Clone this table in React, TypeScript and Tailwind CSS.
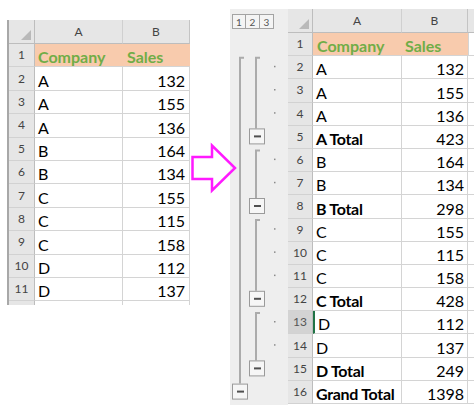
import React from "react";

type Row = { a: string; b: number; bold?: boolean; selected?: boolean };

const leftRows: Row[] = [
  { a: "A", b: 132 },
  { a: "A", b: 155 },
  { a: "A", b: 136 },
  { a: "B", b: 164 },
  { a: "B", b: 134 },
  { a: "C", b: 155 },
  { a: "C", b: 115 },
  { a: "C", b: 158 },
  { a: "D", b: 112 },
  { a: "D", b: 137 },
];

const rightRows: Row[] = [
  { a: "A", b: 132 },
  { a: "A", b: 155 },
  { a: "A", b: 136 },
  { a: "A Total", b: 423, bold: true },
  { a: "B", b: 164 },
  { a: "B", b: 134 },
  { a: "B Total", b: 298, bold: true },
  { a: "C", b: 155 },
  { a: "C", b: 115 },
  { a: "C", b: 158 },
  { a: "C Total", b: 428, bold: true },
  { a: "D", b: 112, selected: true },
  { a: "D", b: 137 },
  { a: "D Total", b: 249, bold: true },
  { a: "Grand Total", b: 1398, bold: true },
];

const ROW_R = 23.2;

function Corner() {
  return (
    <svg width="10" height="10" className="absolute right-[3px] bottom-[3px]">
      <polygon points="10,0 10,10 0,10" fill="#b9b9b9" />
    </svg>
  );
}

function MinusBox({ x, y }: { x: number; y: number }) {
  return (
    <g>
      <rect x={x + 0.5} y={y + 0.5} width="15" height="15" fill="#f6f6f6" stroke="#9a9a9a" />
      <line x1={x + 5} x2={x + 12} y1={y + 8} y2={y + 8} stroke="#505050" strokeWidth="2" />
    </g>
  );
}

function Outline() {
  const top = (i: number) => (i - 1) * ROW_R;
  const mid = (i: number) => top(i) + ROW_R / 2;
  const groups = [
    [2, 5],
    [6, 8],
    [9, 12],
    [13, 15],
  ];
  const dots = [2, 3, 4, 6, 7, 9, 10, 11, 13, 14];
  const line = "#ababab";
  return (
    <svg width="58" height="372" className="block">
      {/* level 1 */}
      <path d={`M14 ${top(2) + 1.5} H10 V${mid(16) - 9}`} stroke={line} strokeWidth="2" fill="none" />
      <MinusBox x={2} y={mid(16) - 9} />
      {/* level 2 */}
      {groups.map(([s, e]) => (
        <g key={s}>
          <path d={`M30 ${top(s) + 1.5} H26 V${mid(e) - 9}`} stroke={line} strokeWidth="2" fill="none" />
          <MinusBox x={19} y={mid(e) - 9} />
        </g>
      ))}
      {dots.map((r) => (
        <rect key={r} x="44" y={mid(r) - 2} width="1.5" height="1.5" fill="#8a8a8a" />
      ))}
    </svg>
  );
}

function LeftSheet() {
  return (
    <div className="ml-[7px] mt-[20px] flex flex-col border-l-2 border-[#a8a8a8]">
      <div className="flex h-[24px] bg-[#e6e6e6] text-[12px] text-[#444]">
        <div className="relative w-[26px] border-r border-b border-[#bdbdbd]">
          <Corner />
        </div>
        <div className="flex w-[88px] items-center justify-center border-r border-b border-r-[#d0d0d0] border-b-[#bdbdbd]">A</div>
        <div className="flex w-[67px] items-center justify-center border-r border-b border-r-[#c4c4c4] border-b-[#bdbdbd]">B</div>
      </div>
      <div className="flex h-[23.4px] text-[16px] leading-none font-bold text-[#70ad47]">
        <div className="flex w-[26px] items-center justify-center border-r border-b border-r-[#bdbdbd] border-b-[#d2d2d2] bg-[#e6e6e6] text-[12px] font-normal text-[#444]">1</div>
        <div className="flex w-[88px] items-end border-b border-[#d4d4d4] bg-[#f8cbad] pb-[1px] pl-[3px]">Company</div>
        <div className="flex w-[67px] items-end border-b border-[#d4d4d4] bg-[#f8cbad] pb-[1px] pl-[4px]">Sales</div>
      </div>
      {leftRows.map((r, i) => (
        <div key={i} className="flex h-[23.4px]">
          <div className="flex w-[26px] items-center justify-center border-r border-b border-r-[#bdbdbd] border-b-[#d2d2d2] bg-[#e6e6e6] text-[12px] text-[#444]">
            {i + 2}
          </div>
          <div className="flex w-[88px] items-end border-r border-b border-[#d4d4d4] pb-[1px] pl-[3px] text-[16px] leading-none text-black">{r.a}</div>
          <div className="flex w-[67px] items-end justify-end border-r border-b border-[#d4d4d4] pb-[1px] pr-[4px] text-[16px] leading-none text-black">{r.b}</div>
        </div>
      ))}
      <div className="flex h-[4px]">
        <div className="w-[26px] border-r border-[#bdbdbd] bg-[#e6e6e6]" />
        <div className="w-[88px] border-r border-[#d4d4d4]" />
        <div className="w-[67px] border-r border-[#d4d4d4]" />
      </div>
    </div>
  );
}

function RightSheet() {
  return (
    <div className="mt-[9px] ml-auto flex w-[244px] flex-col">
      <div className="flex h-[24px] text-[12px] text-[#444]">
        <div className="w-[58px] bg-[#eeeeee] pt-[5px] pl-[2px]">
          <div className="flex">
            {[1, 2, 3].map((n) => (
              <div
                key={n}
                className="flex h-[15px] w-[14px] items-center justify-center border border-[#a3a3a3] bg-[#f4f4f4] text-[10px] leading-none text-[#555] [&:not(:first-child)]:border-l-0"
              >
                {n}
              </div>
            ))}
          </div>
        </div>
        <div className="relative w-[25px] border-r border-b border-[#bdbdbd] bg-[#e6e6e6]">
          <Corner />
        </div>
        <div className="flex w-[89px] items-center justify-center border-r border-b border-r-[#d0d0d0] border-b-[#bdbdbd] bg-[#e6e6e6]">A</div>
        <div className="flex w-[66px] items-center justify-center border-r border-b border-r-[#c4c4c4] border-b-[#bdbdbd] bg-[#e6e6e6]">B</div>
        <div className="flex-1 border-b border-[#bdbdbd] bg-[#e6e6e6]" />
      </div>
      <div className="flex">
        <div className="w-[58px] bg-[#eeeeee]">
          <Outline />
        </div>
        <div className="flex flex-1 flex-col">
          <div className="flex h-[23.2px] text-[16px] leading-none font-bold text-[#70ad47]">
            <div className="flex w-[25px] items-center justify-center border-r border-b border-r-[#bdbdbd] border-b-[#d2d2d2] bg-[#e6e6e6] text-[12px] font-normal text-[#444]">1</div>
            <div className="flex w-[89px] items-end border-b border-[#d4d4d4] bg-[#f8cbad] pb-[1px] pl-[4px]">Company</div>
            <div className="flex w-[66px] items-end border-b border-[#d4d4d4] bg-[#f8cbad] pb-[1px] pl-[3px]">Sales</div>
            <div className="flex-1 border-b border-l border-[#d4d4d4]" />
          </div>
          {rightRows.map((r, i) => (
            <div key={i} className="flex h-[23.2px]">
              <div
                className={`flex w-[25px] items-center justify-center border-r border-b border-r-[#bdbdbd] border-b-[#d2d2d2] text-[12px] ${
                  r.selected ? "bg-[#d3d3d3] text-[#555]" : "bg-[#e6e6e6] text-[#444]"
                }`}
              >
                {i + 2}
              </div>
              <div
                className={`flex w-[89px] items-end border-r border-b border-[#d4d4d4] pb-[1px] pl-[3px] text-[16px] leading-none whitespace-nowrap text-black ${
                  r.bold ? "font-bold tracking-[-0.3px]" : ""
                } ${r.selected ? "border-l-2 border-l-[#217346] pl-[1px]" : ""}`}
              >
                {r.a}
              </div>
              <div className="flex w-[66px] items-end justify-end border-r border-b border-[#d4d4d4] pb-[1px] pr-[3px] text-[16px] leading-none text-black">
                {r.b}
              </div>
              <div className="flex-1 border-b border-[#d4d4d4]" />
            </div>
          ))}
        </div>
      </div>
    </div>
  );
}

export default function App() {
  return (
    <div className="relative flex h-[409px] w-[474px] items-start overflow-hidden bg-white font-['Lato','Liberation_Sans',sans-serif]">
      <LeftSheet />
      <RightSheet />
      <svg width="50" height="52" className="absolute left-[189px] top-[142px]">
        <polygon
          points="3.5,15 23,15 23,3.5 46,26 23,48.5 23,37 3.5,37"
          fill="none"
          stroke="#ff1aff"
          strokeWidth="2.5"
          strokeLinejoin="miter"
        />
      </svg>
    </div>
  );
}
